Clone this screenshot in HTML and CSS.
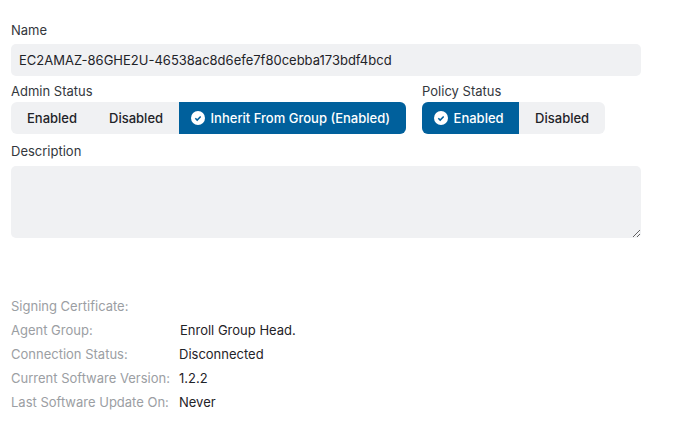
FILE: index.html
```html
<!DOCTYPE html>
<html lang="en">
<head>
  <meta charset="UTF-8" />
  <title>Agent Details</title>
  <link rel="stylesheet" href="styles.css">
</head>
<body>
  <div class="form">
    <label class="field-label" for="name">Name</label>
    <input class="text-input" type="text" id="name" value="EC2AMAZ-86GHE2U-46538ac8d6efe7f80cebba173bdf4bcd" />

    <div class="status-row">
      <div>
        <div class="field-label">Admin Status</div>
        <div class="segmented">
          <button class="seg">Enabled</button>
          <button class="seg">Disabled</button>
          <button class="seg active">
            <svg class="check" viewBox="0 0 14 14" width="14" height="14"><circle cx="7" cy="7" r="7" fill="#fff"/><path d="M4.3 7.2l1.9 1.9 3.5-3.7" fill="none" stroke="#00609c" stroke-width="1.5"/></svg>
            Inherit From Group (Enabled)
          </button>
        </div>
      </div>
      <div>
        <div class="field-label">Policy Status</div>
        <div class="segmented">
          <button class="seg active">
            <svg class="check" viewBox="0 0 14 14" width="14" height="14"><circle cx="7" cy="7" r="7" fill="#fff"/><path d="M4.3 7.2l1.9 1.9 3.5-3.7" fill="none" stroke="#00609c" stroke-width="1.5"/></svg>
            Enabled
          </button>
          <button class="seg">Disabled</button>
        </div>
      </div>
    </div>

    <label class="field-label desc-label" for="description">Description</label>
    <textarea class="text-area" id="description"></textarea>

    <div class="info">
      <div class="info-label">Signing Certificate:</div><div class="info-value"></div>
      <div class="info-label">Agent Group:</div><div class="info-value nudge">Enroll Group Head.</div>
      <div class="info-label">Connection Status:</div><div class="info-value">Disconnected</div>
      <div class="info-label">Current Software Version:</div><div class="info-value">1.2.2</div>
      <div class="info-label">Last Software Update On:</div><div class="info-value">Never</div>
    </div>
  </div>
</body>
</html>
```

FILE: styles.css
```css
body {
  margin: 0;
  font-family: Inter, "Noto Sans", sans-serif;
  font-size: 13px;
  color: #1f2328;
  background: white;
}
.form {
  width: 630px;
  padding: 22px 0 0 11px;
}
.field-label {
  display: block;
  height: 16px;
  line-height: 16px;
  margin-bottom: 6px;
  color: #33373d;
}
.text-input {
  display: block;
  box-sizing: border-box;
  width: 630px;
  height: 32px;
  padding: 0 8px;
  border: none;
  border-radius: 5px;
  background: #f0f1f3;
  font: inherit;
  color: #1f2328;
}
.status-row {
  display: flex;
  gap: 16.5px;
  margin-top: 7px;
}
.status-row .field-label {
  margin-bottom: 3px;
}
.segmented {
  display: flex;
  height: 32px;
  border-radius: 6px;
  overflow: hidden;
  background: #f0f1f3;
}
.seg {
  display: flex;
  align-items: center;
  padding: 0 16px;
  border: none;
  background: none;
  font: inherit;
  font-weight: 500;
  color: #1f2328;
}
.seg.active {
  padding: 0 15.5px 0 12px;
  gap: 5.5px;
  background: #00609c;
  color: white;
}
.check {
  flex: none;
}
.desc-label {
  margin-top: 9px;
  margin-bottom: 7px;
}
.text-area {
  display: block;
  box-sizing: border-box;
  width: 630px;
  height: 72px;
  border: none;
  border-radius: 5px;
  background: #f0f1f3;
  font: inherit;
}
.info {
  display: grid;
  grid-template-columns: 168px 1fr;
  grid-auto-rows: 24px;
  align-items: center;
  margin-top: 56px;
}
.info-label {
  color: #9b9ea3;
}
.info-value {
  color: #1f2328;
}
.nudge {
  padding-left: 1px;
}
```
